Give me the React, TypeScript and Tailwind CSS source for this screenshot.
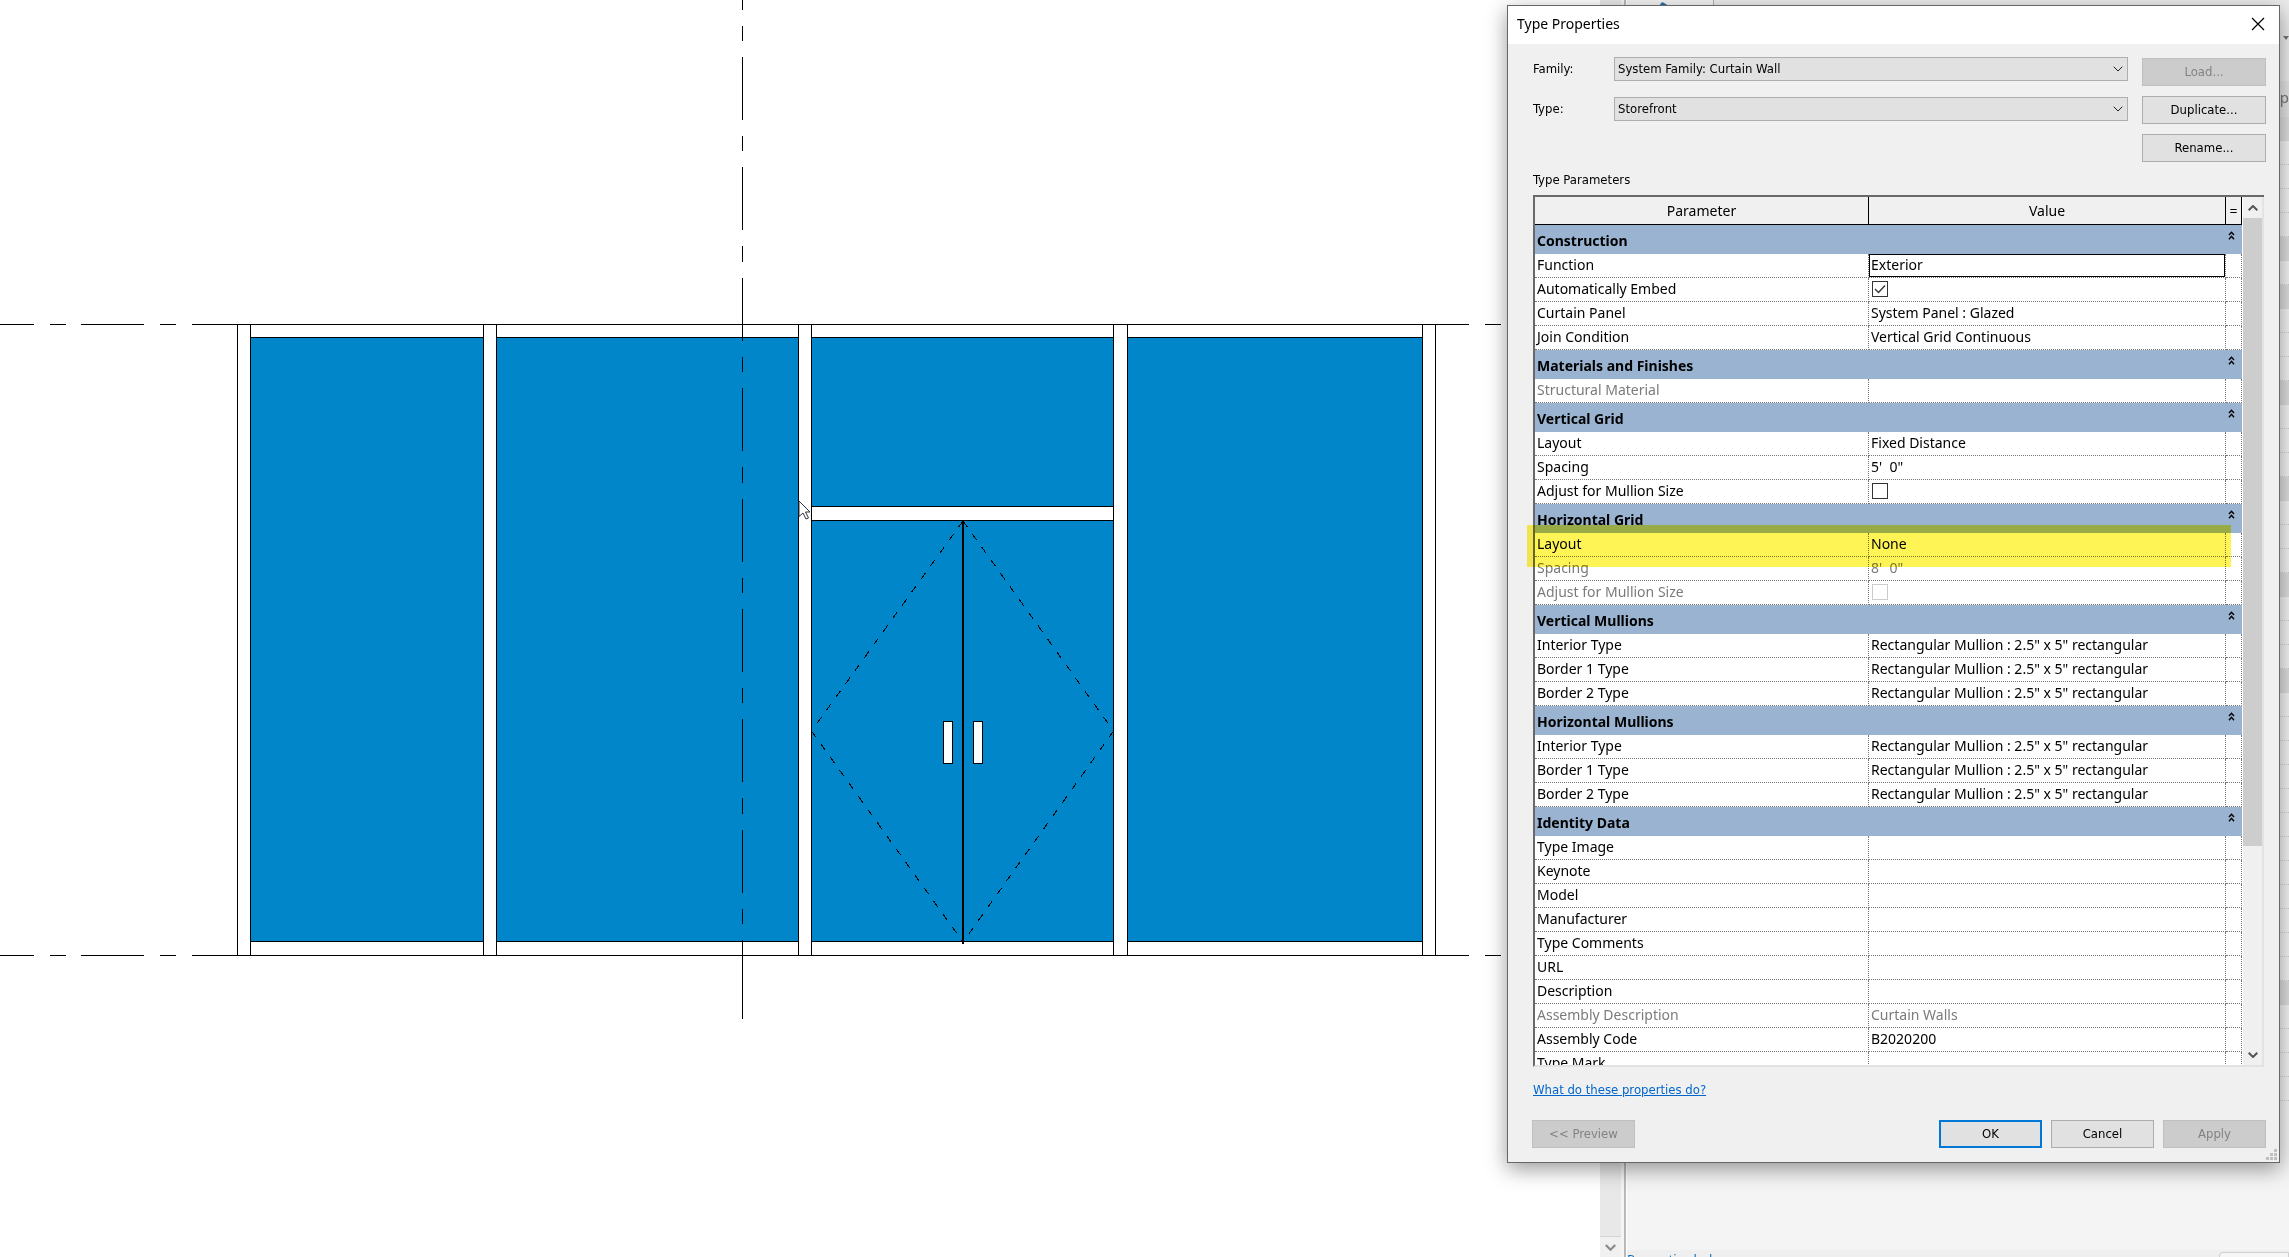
import React from "react";

type Row = {
  name: string;
  value?: string;
  checked?: boolean;
  muted?: boolean;
  editing?: boolean;
};

type Group = { title: string; rows: Row[] };

const mullion = 'Rectangular Mullion : 2.5" x 5" rectangular';

const groups: Group[] = [
  {
    title: "Construction",
    rows: [
      { name: "Function", value: "Exterior", editing: true },
      { name: "Automatically Embed", checked: true },
      { name: "Curtain Panel", value: "System Panel : Glazed" },
      { name: "Join Condition", value: "Vertical Grid Continuous" },
    ],
  },
  {
    title: "Materials and Finishes",
    rows: [{ name: "Structural Material", muted: true }],
  },
  {
    title: "Vertical Grid",
    rows: [
      { name: "Layout", value: "Fixed Distance" },
      { name: "Spacing", value: "5'  0\"" },
      { name: "Adjust for Mullion Size", checked: false },
    ],
  },
  {
    title: "Horizontal Grid",
    rows: [
      { name: "Layout", value: "None" },
      { name: "Spacing", value: "8'  0\"", muted: true },
      { name: "Adjust for Mullion Size", checked: false, muted: true },
    ],
  },
  {
    title: "Vertical Mullions",
    rows: [
      { name: "Interior Type", value: mullion },
      { name: "Border 1 Type", value: mullion },
      { name: "Border 2 Type", value: mullion },
    ],
  },
  {
    title: "Horizontal Mullions",
    rows: [
      { name: "Interior Type", value: mullion },
      { name: "Border 1 Type", value: mullion },
      { name: "Border 2 Type", value: mullion },
    ],
  },
  {
    title: "Identity Data",
    rows: [
      { name: "Type Image" },
      { name: "Keynote" },
      { name: "Model" },
      { name: "Manufacturer" },
      { name: "Type Comments" },
      { name: "URL" },
      { name: "Description" },
      { name: "Assembly Description", value: "Curtain Walls", muted: true },
      { name: "Assembly Code", value: "B2020200" },
      { name: "Type Mark" },
    ],
  },
];

const Chevron = ({ className = "" }: { className?: string }) => (
  <svg viewBox="0 0 10 6" className={className} fill="none" stroke="currentColor">
    <path d="M.7.7 5 5 9.3.7" />
  </svg>
);

// glass panes as x, y, width, height
const panes = [
  [250.5, 337.5, 233, 604],
  [496.5, 337.5, 302, 604],
  [811.5, 337.5, 302, 169],
  [811.5, 520.5, 302, 421],
  [1127.5, 337.5, 295, 604],
];

const posts = [237.5, 250.5, 483.5, 496.5, 798.5, 811.5, 1113.5, 1127.5, 1422.5, 1435.5];

const Elevation = () => (
  <svg
    viewBox="0 0 1600 1257"
    className="block h-auto w-full"
    fill="none"
    stroke="#000"
    shapeRendering="crispEdges"
    role="img"
    aria-label="Storefront elevation"
  >
    {panes.map(([x, y, w, h]) => (
      <rect key={`${x}-${y}`} x={x} y={y} width={w} height={h} fill="#0086c9" />
    ))}
    {posts.map((x) => (
      <path key={x} d={`M${x} 324V956`} />
    ))}
    {[324.5, 955.5].map((y) => (
      <g key={y}>
        <path d={`M0 ${y}H34M50 ${y}H66M81 ${y}H144M160 ${y}H176M192 ${y}H1469`} />
        <path d={`M1485 ${y}H1501`} />
      </g>
    ))}
    <path d="M742.5 -53.4V940" strokeDasharray="63 16 15.4 16" />
    <path d="M742.5 940V1019" />
    <path d="M963 521V944" strokeWidth="2" />
    <g strokeDasharray="7.5 8.6">
      <path d="M963 521 811.5 731" />
      <path d="M963 521 1113.5 731" />
      <path d="M811.5 731 963 942" />
      <path d="M1113.5 731 963 942" />
    </g>
    <rect x="943.5" y="721.5" width="9" height="42" fill="#fff" />
    <rect x="973.5" y="721.5" width="9" height="42" fill="#fff" />
    <path
      d="M799 501 810 512H805.500L808.500 518 806 519 803 513 799 516.500Z"
      fill="#fff"
      stroke="#334"
      shapeRendering="auto"
    />
  </svg>
);

const paletteHeaders = [0, 5, 7, 11, 15, 19, 23, 36];
const paletteRows = Array.from({ length: 41 }, (_, i) => i);

// properties palette that mostly sits behind the dialog
const Palette = () => (
  <aside className="flex h-screen w-[689px] shrink-0 overflow-hidden bg-[#f4f4f4]">
    <div className="flex w-[21px] flex-col items-center justify-between bg-[#e8e8e8]">
      <svg viewBox="0 0 24 6" className="h-[6px] w-6 shrink-0 -translate-x-[18px] overflow-visible" fill="none" stroke="#aaa">
        <path d="M-12 6V5Q-12 1-8 1H8Q12 1 12 6" />
        <circle cx="5" cy="6" r="3" />
      </svg>
      <button
        aria-label="Scroll down"
        className="flex h-[21px] w-full items-center justify-center border-t border-[#d4d4d4] bg-[#f0f0f0] text-[#8a8a8a]"
      >
        <Chevron className="h-[7px] w-[11px] stroke-2" />
      </button>
    </div>
    <div className="ml-[3px] w-[3px] border-l-2 border-[#b9b9b9] bg-white" />
    <div className="flex min-w-0 flex-1 flex-col">
      <div className="flex h-[81px]">
        <div className="flex w-[87px] items-start justify-center border-r border-[#b0b0b0]">
          <svg viewBox="0 0 12 6" className="mr-3 h-[6px] w-3">
            <path d="M1 6 4 2 6 3 11 6Z" fill="#2a70a8" />
          </svg>
        </div>
        <div className="flex flex-1 items-start justify-end bg-[#ececec] pt-9">
          <svg viewBox="0 0 6 4" className="h-1 w-[6px]">
            <path d="M0 0H6L3 4Z" fill="#777" />
          </svg>
        </div>
      </div>
      <div className="flex h-9 items-center justify-end bg-[#e4e4e4] pb-1 text-[15px] text-[#777]">
        p
      </div>
      {paletteRows.map((i) => (
        <div
          key={i}
          className={
            paletteHeaders.includes(i)
              ? "h-6 shrink-0 bg-[#dedede]"
              : "h-6 shrink-0 border-b border-dotted border-[#d0d0d0]"
          }
        />
      ))}
      <div className="mt-auto flex h-[7px] justify-between overflow-hidden bg-[#efefef]">
        <a href="#help" className="text-[13px] leading-[18px] text-[#1672b5]">
          Properties help
        </a>
        <div className="mt-[2px] h-6 w-[70px] rounded-tl-sm border border-[#cfcfcf] bg-[#f6f6f6]" />
      </div>
    </div>
  </aside>
);

const Field = ({ id, label, value }: { id: string; label: string; value: string }) => (
  <div className="flex items-center">
    <label htmlFor={id} className="w-[81px]">
      {label}
    </label>
    <div className="relative flex-1">
      <select
        id={id}
        defaultValue={value}
        className="block h-6 w-full appearance-none border border-[#adadad] bg-[#e1e1e1] px-[3px]"
      >
        <option>{value}</option>
      </select>
      <Chevron className="pointer-events-none absolute right-[5px] top-[9px] h-[6px] w-[10px] text-[#222]" />
    </div>
  </div>
);

const Button = ({ children, disabled, primary, className = "" }: {
  children: React.ReactNode;
  disabled?: boolean;
  primary?: boolean;
  className?: string;
}) => (
  <button
    disabled={disabled}
    className={`h-7 bg-[#e1e1e1] disabled:border-[#bfbfbf] disabled:bg-[#cccccc] disabled:text-[#838383] ${
      primary ? "border-2 border-[#0078d7]" : "border border-[#adadad]"
    } ${className}`}
  >
    {children}
  </button>
);

const Cell = ({ row }: { row: Row }) => {
  if (row.editing) {
    return (
      <input
        aria-label={row.name}
        defaultValue={row.value}
        className="block h-[23px] w-full border border-black bg-white px-px pb-[2px] outline-none"
      />
    );
  }
  if (row.checked !== undefined) {
    return (
      <span className="relative ml-[3px] mt-[3px] block h-4 w-4">
        <input
          type="checkbox"
          aria-label={row.name}
          defaultChecked={row.checked}
          disabled={row.muted}
          className="block h-4 w-4 appearance-none border border-[#333] bg-white disabled:border-[#ccc]"
        />
        {row.checked && (
          <svg
            viewBox="0 0 16 16"
            className="pointer-events-none absolute inset-0"
            fill="none"
            stroke="#333"
            strokeWidth="1.4"
          >
            <path d="M3 8 6.500 11.500 13 4.500" />
          </svg>
        )}
      </span>
    );
  }
  return <span className="whitespace-pre pl-[2px]">{row.value}</span>;
};

const ParameterTable = () => (
  <table className="w-[707px] table-fixed border-separate border-spacing-0 self-start text-left text-sm">
    <colgroup>
      <col className="w-[334px]" />
      <col className="w-[357px]" />
      <col className="w-4" />
    </colgroup>
    <thead>
      <tr className="h-7 bg-[#f0f0f0] text-center">
        <th className="border-b border-r border-black p-0 font-normal">Parameter</th>
        <th className="border-b border-r border-black p-0 font-normal">Value</th>
        <th className="border-b border-r border-black p-0 font-normal">=</th>
      </tr>
    </thead>
    {groups.map((group) => (
      <tbody key={group.title}>
        <tr className="h-[29px] bg-[#99b3d1]">
          <th colSpan={3} className="p-0">
            <div className="flex h-[29px] justify-between pl-[2px] pr-[7px]">
              <span className="pt-[6px] leading-5">{group.title}</span>
              <button aria-label={`Collapse ${group.title}`} className="flex h-5 w-[7px] items-start pt-[6px]">
                <svg viewBox="0 0 7 9" className="h-[9px] w-[7px]" fill="none" stroke="#000" strokeWidth="1.4">
                  <path d="M1 4 3.500 1.200 6 4M1 8.200 3.500 5.400 6 8.200" />
                </svg>
              </button>
            </div>
          </th>
        </tr>
        {group.rows.map((row) => (
          <tr
            key={row.name}
            className={row.muted ? "h-6 align-top leading-[22px] text-[#7b7b7b]" : "h-6 align-top leading-[22px]"}
          >
            <td className="h-6 border-b border-r border-dotted border-[#777] py-0 pl-[2px] pr-0">
              {row.name}
            </td>
            <td className="h-6 border-b border-r border-dotted border-[#777] p-0">
              <Cell row={row} />
            </td>
            <td className="h-6 border-b border-r border-dotted border-[#777] p-0" />
          </tr>
        ))}
      </tbody>
    ))}
  </table>
);

const TypeProperties = () => (
  <section
    role="dialog"
    aria-label="Type Properties"
    className="absolute right-[9px] top-[5px] w-[773px] border border-[#666] bg-[#f0f0f0] text-[13px] text-black shadow-[0_6px_20px_rgba(0,0,0,0.4)]"
  >
    <header className="flex h-[38px] items-center justify-between bg-white pb-[2px] pl-[9px] pr-[14px] text-sm">
      <h1>Type Properties</h1>
      <button aria-label="Close">
        <svg viewBox="0 0 14 14" className="h-[14px] w-[14px]" fill="none" stroke="#000" strokeWidth="1.2">
          <path d="M1 1 13 13M13 1 1 13" />
        </svg>
      </button>
    </header>
    <div className="pb-[14px] pl-[25px] pr-[13px] font-['DejaVu_Sans_Condensed',sans-serif]">
      <div className="flex gap-[14px]">
        <div className="flex flex-1 flex-col gap-4 pt-[13px]">
          <Field id="family" label="Family:" value="System Family: Curtain Wall" />
          <Field id="type" label="Type:" value="Storefront" />
        </div>
        <div className="flex w-[124px] flex-col gap-[10px] pt-[14px]">
          <Button disabled>Load...</Button>
          <Button>Duplicate...</Button>
          <Button>Rename...</Button>
        </div>
      </div>
      <h2 className="pb-[5px] pt-2 leading-5">Type Parameters</h2>
      <div className="relative mr-[2px] font-['Noto_Sans',sans-serif]">
        <div className="flex h-[872px] overflow-hidden border-b-2 border-l-2 border-t-2 border-b-[#e3e3e3] border-l-[#696969] border-t-[#696969] bg-white">
          <ParameterTable />
          <div className="ml-px flex flex-1 flex-col border-r-2 border-[#e3e3e3] bg-[#f0f0f0] text-[#555]">
            <button aria-label="Scroll up" className="flex h-[21px] items-center justify-center">
              <Chevron className="h-[6px] w-[10px] rotate-180 stroke-2" />
            </button>
            <div className="h-[628px] bg-[#cdcdcd]" />
            <button aria-label="Scroll down" className="mt-auto flex h-[21px] items-center justify-center">
              <Chevron className="h-[6px] w-[10px] stroke-2" />
            </button>
          </div>
        </div>
        {/* highlighter stroke over the horizontal grid layout row */}
        <div className="pointer-events-none absolute -left-[6px] right-[33px] top-[330px] h-[42px] bg-[#fff455] mix-blend-multiply" />
      </div>
      <a href="#properties" className="mt-[13px] block w-fit leading-5 text-[#0066cc] underline">
        What do these properties do?
      </a>
      <div className="-ml-px mt-5 flex gap-[9px]">
        <Button disabled className="mr-auto w-[103px]">
          &lt;&lt; Preview
        </Button>
        <Button primary className="w-[103px]">
          OK
        </Button>
        <Button className="w-[103px]">Cancel</Button>
        <Button disabled className="w-[103px]">
          Apply
        </Button>
      </div>
    </div>
    <svg viewBox="0 0 11 11" className="absolute bottom-[2px] right-[2px] h-[11px] w-[11px]" fill="#bfbfbf">
      <path d="M8 0h3v3H8zM4 4h3v3H4zM8 4h3v3H8zM0 8h3v3H0zM4 8h3v3H4zM8 8h3v3H8z" />
    </svg>
  </section>
);

const App = () => {
  return (
    <main className="relative flex min-h-screen overflow-hidden bg-white font-['Noto_Sans',sans-serif]">
      <div className="min-w-0 flex-1">
        <Elevation />
      </div>
      <Palette />
      <TypeProperties />
    </main>
  );
};

export default App;
